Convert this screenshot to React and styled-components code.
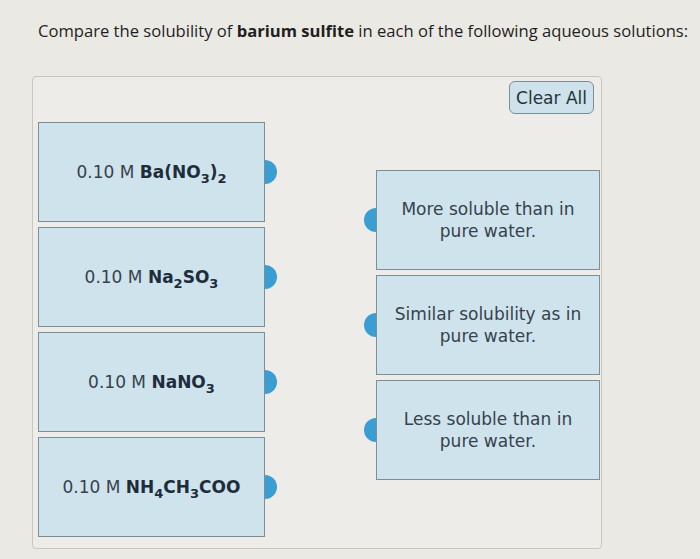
import React from "react";
import styled, { createGlobalStyle } from "styled-components";

const GlobalStyle = createGlobalStyle`
  body {
    margin: 0;
    background: #ebe9e4;
  }
`;

const Page = styled.div`
  min-height: 100vh;
  padding: 19px 0 0 0;
  box-sizing: border-box;
  background: #ebe9e4;
`;

const Prompt = styled.p`
  margin: 0 0 0 38px;
  font-family: "Open Sans", "Liberation Sans", sans-serif;
  font-size: 16.6px;
  line-height: 24px;
  white-space: nowrap;
  color: #1f1f1f;

  b {
    font-weight: 700;
  }
`;

const Panel = styled.div`
  margin: 33px 0 0 32px;
  width: 570px;
  height: 473px;
  box-sizing: border-box;
  padding: 4px 7px 0 5px;
  background: #edece8;
  border: 1px solid #c8c7c2;
  border-radius: 4px;
`;

const Toolbar = styled.div`
  display: flex;
  justify-content: flex-end;
`;

const ClearButton = styled.button`
  height: 33px;
  padding: 0 6px;
  font-family: "DejaVu Sans", Verdana, sans-serif;
  font-size: 17px;
  color: #26323b;
  background: #cde2ea;
  border: 1px solid #7c8d96;
  border-radius: 6px;
`;

const Board = styled.div`
  display: grid;
  grid-template-columns: 227px 224px;
  column-gap: 111px;
  margin-top: 8px;
`;

const Column = styled.div`
  display: flex;
  flex-direction: column;
  gap: 5px;
  padding-top: ${(p) => p.$offset || 0}px;
`;

const Card = styled.div`
  position: relative;
  height: 100px;
  box-sizing: border-box;
  display: flex;
  align-items: center;
  justify-content: center;
  text-align: center;
  padding: 0 12px;
  background: #cfe3ec;
  border: 1px solid #7e8e97;
  font-family: "DejaVu Sans", Verdana, sans-serif;
  font-size: 17px;
  line-height: 22px;
  color: #36424c;
`;

const Label = styled.div`
  white-space: nowrap;
`;

/* drag handle: half a disc sticking out of the card edge */
const Tab = styled.span`
  position: absolute;
  top: 50%;
  width: 12px;
  height: 24px;
  margin-top: -12px;
  background: #3a9ed2;
  ${(p) =>
    p.$side === "left"
      ? "left: -13px; border-radius: 12px 0 0 12px;"
      : "right: -13px; border-radius: 0 12px 12px 0;"}
`;

const Formula = styled.b`
  font-weight: 700;
  color: #1e2d3c;
`;

const Sub = styled.sub`
  font-size: 13px;
  line-height: 0;
  vertical-align: -5px;
`;

const solutions = [
  <>
    Ba(NO<Sub>3</Sub>)<Sub>2</Sub>
  </>,
  <>
    Na<Sub>2</Sub>SO<Sub>3</Sub>
  </>,
  <>
    NaNO<Sub>3</Sub>
  </>,
  <>
    NH<Sub>4</Sub>CH<Sub>3</Sub>COO
  </>,
];

const answers = [
  ["More soluble than in", "pure water."],
  ["Similar solubility as in", "pure water."],
  ["Less soluble than in", "pure water."],
];

export default function App() {
  return (
    <Page>
      <GlobalStyle />
      <Prompt>
        Compare the solubility of <b>barium sulfite</b> in each of the following aqueous solutions:
      </Prompt>
      <Panel>
        <Toolbar>
          <ClearButton>Clear All</ClearButton>
        </Toolbar>
        <Board>
          <Column>
            {solutions.map((s, i) => (
              <Card key={i}>
                <Label>
                  0.10 M <Formula>{s}</Formula>
                </Label>
                <Tab $side="right" />
              </Card>
            ))}
          </Column>
          <Column $offset={48}>
            {answers.map(([a, b], i) => (
              <Card key={i}>
                <Label>
                  {a}
                  <br />
                  {b}
                </Label>
                <Tab $side="left" />
              </Card>
            ))}
          </Column>
        </Board>
      </Panel>
    </Page>
  );
}
